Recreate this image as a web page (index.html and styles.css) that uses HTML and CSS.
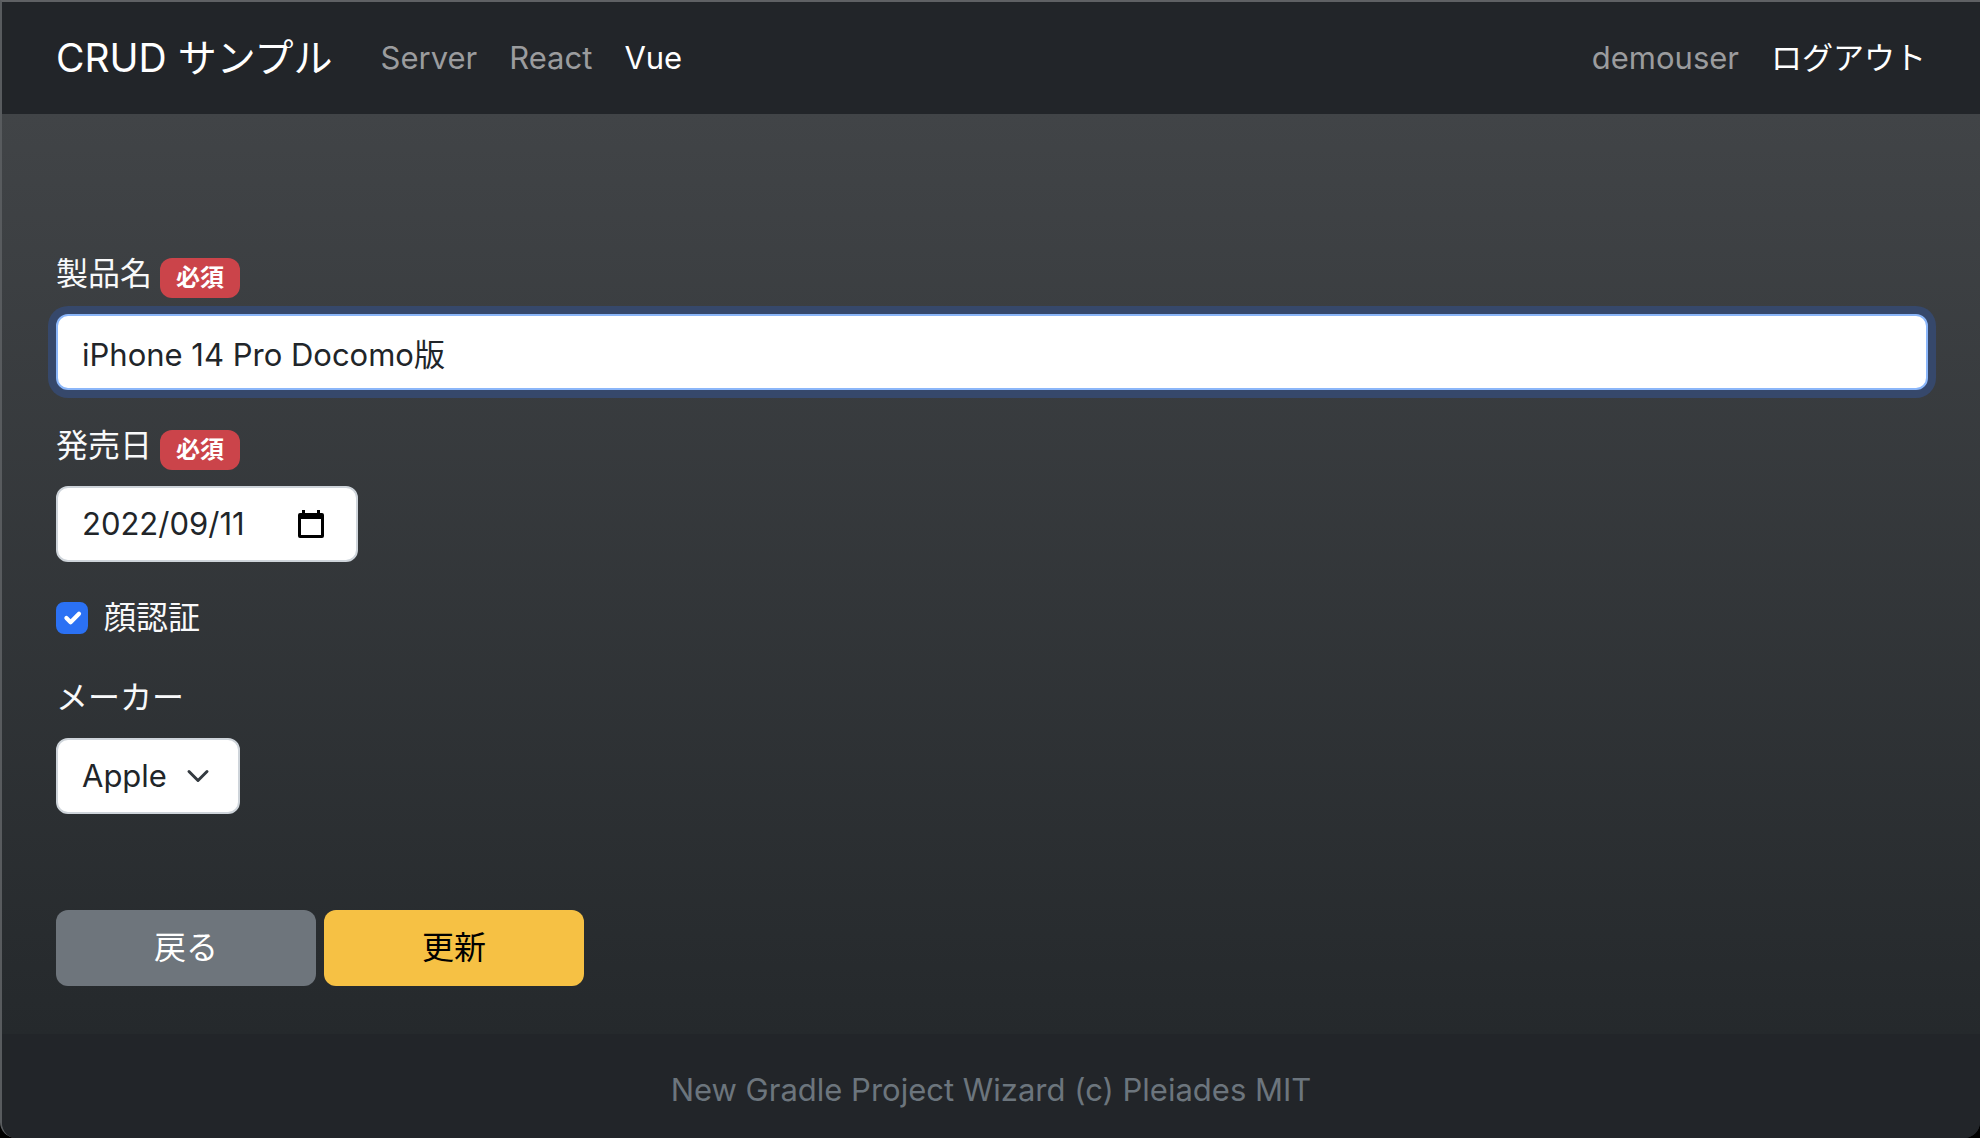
FILE: index.html
```html
<!DOCTYPE html>
<html lang="ja">
<head>
  <meta charset="utf-8">
  <meta name="viewport" content="width=device-width, initial-scale=1">
  <title>CRUD サンプル</title>
  <link rel="stylesheet" href="styles.css">
</head>
<body>
  <header class="navbar">
    <a class="navbar-brand" href="#">CRUD サンプル</a>
    <nav class="navbar-nav">
      <a class="nav-link" href="#">Server</a>
      <a class="nav-link" href="#">React</a>
      <a class="nav-link active" href="#">Vue</a>
    </nav>
    <div class="navbar-nav navbar-user">
      <span class="nav-link">demouser</span>
      <a class="nav-link active" href="#">ログアウト</a>
    </div>
  </header>

  <main class="main">
    <form class="form">
      <div class="field">
        <div class="field-head">
          <label for="name">製品名</label>
          <span class="badge">必須</span>
        </div>
        <input class="form-control focused" type="text" id="name" value="iPhone 14 Pro Docomo版">
      </div>

      <div class="field">
        <div class="field-head">
          <label for="releaseDate">発売日</label>
          <span class="badge">必須</span>
        </div>
        <div class="form-control date-control">
          <input class="date-input" type="text" id="releaseDate" value="2022/09/11">
          <button class="date-button" type="button" aria-label="カレンダーを開く">
            <svg width="26" height="28" viewBox="0 0 26 28">
              <path d="M2 3h2V0h3v3h12V0h3v3h2a2 2 0 0 1 2 2v21a2 2 0 0 1-2 2H2a2 2 0 0 1-2-2V5a2 2 0 0 1 2-2zM3 9v16h20V9z" fill="#000" fill-rule="evenodd"/>
            </svg>
          </button>
        </div>
      </div>

      <div class="field form-check">
        <input class="form-check-input" type="checkbox" id="faceAuth" checked>
        <label for="faceAuth">顔認証</label>
      </div>

      <div class="field">
        <div class="field-head">
          <label for="company">メーカー</label>
        </div>
        <select class="form-control form-select" id="company">
          <option selected>Apple</option>
        </select>
      </div>

      <div class="buttons">
        <button class="btn btn-secondary" type="button">戻る</button>
        <button class="btn btn-warning" type="submit">更新</button>
      </div>
    </form>
  </main>

  <footer class="footer">New Gradle Project Wizard (c) Pleiades MIT</footer>
</body>
</html>
```
FILE: styles.css
```css
* {
  box-sizing: border-box;
}

html {
  background: #000;
}

body {
  margin: 0;
  min-height: 100vh;
  display: flex;
  flex-direction: column;
  overflow: hidden;
  font-family: Inter, "Noto Sans CJK JP", sans-serif;
  font-size: 31px;
  line-height: 48px;
  color: #f8f9fa;
  background: #222529;
  border-top: 2px solid #5f6164;
  border-left: 2px solid #585b5e;
  border-radius: 0 0 16px 16px;
}

input,
select,
button {
  font: inherit;
}

label,
.btn {
  font-size: 32px;
}

.navbar {
  display: flex;
  align-items: center;
  height: 112px;
  padding: 0 54px;
  background: #222529;
}

.navbar-brand {
  margin-right: 48px;
  font-size: 39px;
  line-height: 60px;
  color: #fff;
  text-decoration: none;
}

.navbar-nav {
  display: flex;
  gap: 32px;
}

.navbar-user {
  margin-left: auto;
}

.nav-link {
  color: #9b9c9e;
  text-decoration: none;
}

.nav-link.active {
  color: #fff;
}

.main {
  flex: 1;
  padding: 136px 52px 48px 54px;
  background: linear-gradient(#414447, #25292c);
}

.field {
  margin-bottom: 32px;
}

.field-head {
  display: flex;
  align-items: center;
  gap: 8px;
  height: 48px;
  margin-bottom: 16px;
}

.badge {
  align-self: flex-end;
  padding: 8px 16px;
  font-size: 24px;
  font-weight: 700;
  line-height: 24px;
  color: #fff;
  background: #cb444a;
  border-radius: 12px;
}

.form-control {
  display: block;
  width: 100%;
  height: 76px;
  padding: 12px 24px;
  color: #212529;
  background: #fff;
  border: 2px solid #ced4da;
  border-radius: 12px;
}

.form-control.focused {
  border-color: #8bb6f9;
  outline: 0;
  box-shadow: 0 0 0 8px #36486b;
}

.date-control {
  display: flex;
  align-items: center;
  justify-content: space-between;
  width: 302px;
  padding-right: 32px;
}

.date-input {
  width: 180px;
  padding: 0;
  color: inherit;
  background: none;
  border: 0;
  outline: 0;
}

.date-button {
  display: flex;
  padding: 0;
  background: none;
  border: 0;
  cursor: pointer;
}

.form-check {
  display: flex;
  align-items: center;
  gap: 16px;
  height: 48px;
}

.form-check-input {
  appearance: none;
  width: 32px;
  height: 32px;
  margin: 0;
  background: #fff;
  border: 2px solid #ced4da;
  border-radius: 8px;
}

.form-check-input:checked {
  background: #2b71f4 url("data:image/svg+xml,%3csvg xmlns='http://www.w3.org/2000/svg' viewBox='0 0 20 20'%3e%3cpath fill='none' stroke='%23fff' stroke-linecap='round' stroke-linejoin='round' stroke-width='3' d='m6 10 3 3 6-6'/%3e%3c/svg%3e") center / contain no-repeat;
  border-color: #2b71f4;
}

.form-select {
  appearance: none;
  width: 184px;
  background: #fff url("data:image/svg+xml,%3csvg xmlns='http://www.w3.org/2000/svg' viewBox='0 0 16 16'%3e%3cpath fill='none' stroke='%23343a40' stroke-linecap='round' stroke-linejoin='round' stroke-width='2' d='m2 5 6 6 6-6'/%3e%3c/svg%3e") right 24px center / 32px 24px no-repeat;
}

.buttons {
  display: flex;
  gap: 8px;
  margin-top: 96px;
}

.btn {
  width: 260px;
  height: 76px;
  padding: 12px 24px;
  border: 0;
  border-radius: 12px;
  cursor: pointer;
}

.btn-secondary {
  color: #fff;
  background: #6e757c;
}

.btn-warning {
  color: #000;
  background: #f6c144;
}

.footer {
  padding: 32px 24px 24px;
  text-align: center;
  color: #6c757d;
  background: #222529;
}
```
